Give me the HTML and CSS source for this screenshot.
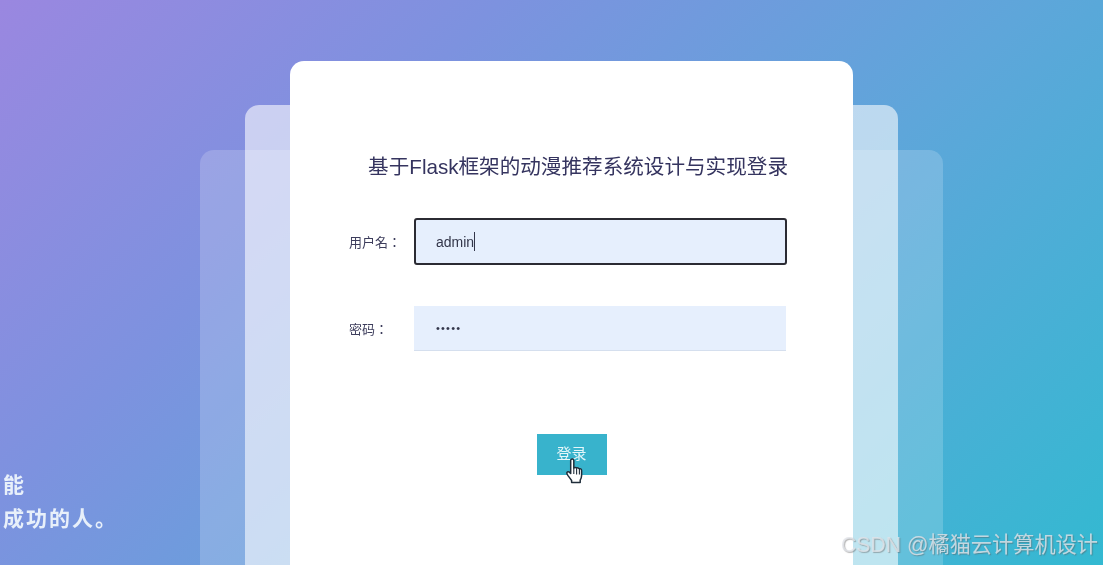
FILE: index.html
```html
<!DOCTYPE html>
<html lang="zh-CN">
<head>
    <meta charset="UTF-8">
    <meta name="viewport" content="width=device-width, initial-scale=1.0">
    <title>登录</title>
    <link rel="stylesheet" href="styles.css">
</head>
<body>
    <div class="stage">
        <!-- Slogan behind the cards, cut off at the left edge -->
        <div class="slogan">
            <p>能</p>
            <p>成功的人。</p>
        </div>

        <!-- Stacked cards -->
        <div class="card card-back"></div>
        <div class="card card-mid"></div>
        <div class="card card-front">
            <h1>基于Flask框架的动漫推荐系统设计与实现登录</h1>
            <form class="login-form">
                <div class="row row-user">
                    <label for="username" lang="zh-TW">用户名：</label>
                    <div class="field field-focus">
                        <input id="username" class="input input-focus" type="text" value="admin">
                        <span class="caret"></span>
                    </div>
                </div>
                <div class="row row-pass">
                    <label for="password" lang="zh-TW">密码：</label>
                    <div class="field">
                        <input id="password" class="input input-pass" type="password" value="12345">
                    </div>
                </div>
                <div class="actions">
                    <button class="button" type="button">登录</button>
                    <svg class="hand" viewBox="0 0 17 26" width="17" height="26">
                        <path d="M5 1.5c1-1 2.6-.6 2.8 1V10c.8-.8 2.2-.8 2.8.2.8-.6 2.2-.4 2.6.6 1-.4 2.4.2 2.4 1.6v5.2c0 2-.6 3.2-1.4 4.6v2.3H5.6v-2c-1-1.4-2.2-3-3.4-4.6-.7-1-1.5-2-1.4-3 .2-1.2 1.6-1.6 2.5-.8l1.4 1.4V2.8c0-.5 0-1 .3-1.3z" fill="#fff" stroke="#1f2d3a" stroke-width="1.5" stroke-linejoin="round"/>
                        <path d="M7.8 10v6M10.6 10.4v6M13.4 11v5.5" fill="none" stroke="#1f2d3a" stroke-width="1.1"/>
                    </svg>
                </div>
            </form>
        </div>
    </div>

    <!-- Watermark -->
    <div class="watermark">CSDN @橘猫云计算机设计</div>
</body>
</html>
```

FILE: styles.css
```css
/* General Styles */
html, body {
    margin: 0;
    padding: 0;
    height: 100%;
}

body {
    font-family: "Liberation Sans", "Noto Sans CJK SC", sans-serif;
    overflow: hidden;
}

/* Everything sits in one grid cell so the cards can overlap */
.stage {
    display: grid;
    grid-template-columns: 1fr;
    grid-template-rows: 565px;
    height: 565px;
    overflow: hidden;
    background: linear-gradient(135deg, #9a87e0 0%, #7d92df 30%, #5ea6da 62%, #33b9d1 100%);
    filter: blur(0.5px);
}

.stage > * {
    grid-area: 1 / 1;
}

/* Slogan */
.slogan {
    align-self: end;
    margin-bottom: 29px;
    padding-left: 3px;
    color: #e8f0fa;
    font-size: 21px;
    font-weight: 700;
    letter-spacing: 2px;
}

.slogan p {
    margin: 0;
    line-height: 34px;
}

/* Cards */
.card {
    border-radius: 14px 14px 0 0;
}

.card-back {
    margin: 150px 160px 0 200px;
    background: rgba(255, 255, 255, 0.18);
}

.card-mid {
    margin: 105px 205px 0 245px;
    background: rgba(255, 255, 255, 0.58);
}

.card-front {
    margin: 61px 250px 0 290px;
    background: #fff;
}

h1 {
    margin: 94px 65px 0 0;
    color: #35345f;
    font-size: 20.6px;
    font-weight: 400;
    line-height: 24px;
    text-align: right;
    white-space: nowrap;
}

/* Form */
.login-form {
    margin-top: 39px;
}

.row {
    display: flex;
    align-items: center;
    padding-left: 59px;
}

.row-pass {
    margin-top: 41px;
}

.row label {
    width: 65px;
    flex: none;
    color: #3d3d5c;
    font-family: "Noto Sans CJK TC", sans-serif;
    font-size: 13px;
}

.field {
    position: relative;
    width: 372px;
}

.field-focus {
    width: 373px;
}

.input {
    display: block;
    box-sizing: border-box;
    width: 100%;
    height: 45px;
    padding: 0 0 0 22px;
    border: 0;
    border-bottom: 1px solid #d5dfee;
    outline: 0;
    background: #e6effd;
    color: #33364a;
    font-family: "Liberation Sans", sans-serif;
    font-size: 14px;
}

.input-focus {
    height: 47px;
    border: 2px solid #2b2b33;
    border-radius: 3px;
    padding-left: 20px;
}

.input-pass {
    font-size: 11px;
    letter-spacing: 1.2px;
}

.caret {
    position: absolute;
    left: 60px;
    top: 14px;
    width: 1px;
    height: 19px;
    background: #33364a;
}

/* Button */
.actions {
    position: relative;
    display: flex;
    justify-content: center;
    margin-top: 83px;
}

.button {
    width: 70px;
    height: 41px;
    padding: 0 0 4px;
    border: 0;
    background: #38b3cc;
    color: #e4f6f9;
    font-family: inherit;
    font-size: 15px;
}

.hand {
    position: absolute;
    left: 276px;
    top: 24px;
}

/* Watermark */
.watermark {
    position: fixed;
    right: 5px;
    bottom: 8px;
    color: rgba(225, 228, 232, 0.8);
    font-size: 21.2px;
    line-height: 24px;
    white-space: nowrap;
    text-shadow: 1px 1px 1px rgba(90, 90, 90, 0.45);
}
```
